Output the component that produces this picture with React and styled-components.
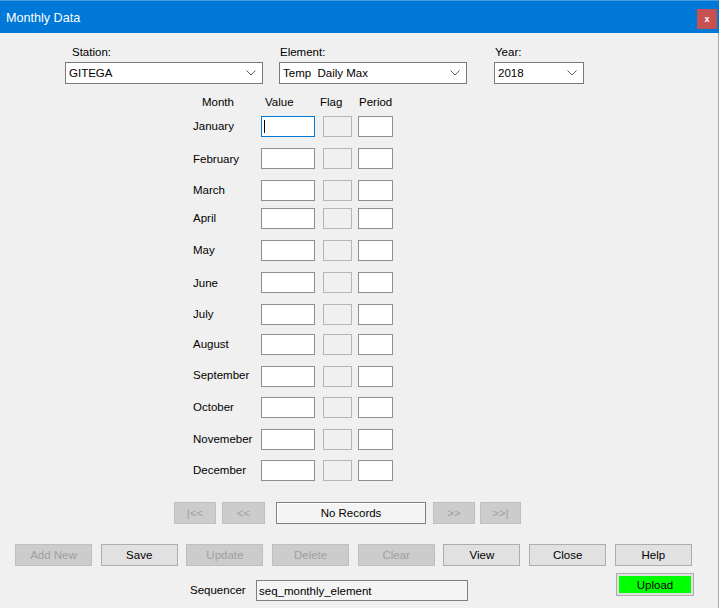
import React from "react";
import styled, { createGlobalStyle } from "styled-components";

const Global = createGlobalStyle`
  html, body { margin: 0; padding: 0; background: #f0f0f0; }
  body { font-family: "Liberation Sans", Arial, sans-serif; font-size: 11.5px; color: #000; }
  * { box-sizing: border-box; }
`;

const Window = styled.div`
  width: 719px;
  height: 608px;
  background: #f0f0f0;
  display: flex;
  flex-direction: column;
  overflow: hidden;
`;

const TitleBar = styled.div`
  height: 33px;
  flex: none;
  background: #0078d7;
  border-top: 1px solid #4c9be0;
  display: flex;
  align-items: flex-start;
  justify-content: space-between;
  padding-left: 6px;
  padding-right: 2px;
`;

const Title = styled.div`
  color: #fff;
  font-size: 12.6px;
  line-height: 14px;
  margin-top: 10px;
`;

const CloseBtn = styled.div`
  width: 20px;
  height: 20px;
  margin-top: 8px;
  background: #c75050;
  color: #fff;
  font-size: 9px;
  font-weight: bold;
  display: flex;
  align-items: center;
  justify-content: center;
  line-height: 1;
`;

const Body = styled.div`
  flex: 1;
  border-right: 1px solid #a9a9a9;
  display: flex;
  flex-direction: column;
`;

const TopRow = styled.div`
  display: flex;
  padding-left: 65px;
  margin-top: 12px;
`;

const FieldGroup = styled.div`
  display: flex;
  flex-direction: column;
  width: ${(p) => p.$w}px;
  margin-right: ${(p) => p.$mr || 0}px;
`;

const FieldLabel = styled.div`
  height: 14px;
  line-height: 14px;
  padding-left: ${(p) => p.$indent}px;
  margin-bottom: 3px;
`;

const Combo = styled.div`
  height: 22px;
  background: #fff;
  border: 1px solid #7a7a7a;
  display: flex;
  align-items: center;
  justify-content: space-between;
  padding: 0 6px 0 3px;
`;

const Chevron = () => (
  <svg width="10" height="6" viewBox="0 0 10 6">
    <path d="M0.5 0.5 L5 5 L9.5 0.5" fill="none" stroke="#606060" strokeWidth="1" />
  </svg>
);

const HeaderRow = styled.div`
  display: flex;
  padding-left: 202px;
  margin-top: 11px;
  height: 14px;
  line-height: 14px;
`;

const HeaderCell = styled.div`
  width: ${(p) => p.$w}px;
`;

const MonthRow = styled.div`
  display: flex;
  align-items: center;
  padding-left: 193px;
  height: 21px;
  margin-top: ${(p) => p.$mt}px;
`;

const MonthLabel = styled.div`
  width: 68px;
  line-height: 14px;
  margin-top: ${(p) => p.$dy || 0}px;
`;

const Box = styled.div`
  width: ${(p) => p.$w}px;
  height: 21px;
  margin-right: ${(p) => p.$mr || 0}px;
  background: ${(p) => (p.$disabled ? "#f0f0f0" : "#fff")};
  border: 1px solid ${(p) => (p.$focus ? "#0078d7" : p.$disabled ? "#b5b5b5" : "#8f8f8f")};
  display: flex;
  align-items: center;
  padding-left: 2px;
`;

const Caret = styled.span`
  width: 1px;
  height: 13px;
  background: #000;
`;

const NavRow = styled.div`
  display: flex;
  padding-left: 174px;
  margin-top: 21px;
  height: 22px;
`;

const Btn = styled.div`
  width: ${(p) => p.$w}px;
  height: ${(p) => p.$h || 22}px;
  margin-right: ${(p) => p.$mr || 0}px;
  flex: none;
  display: flex;
  align-items: center;
  justify-content: center;
  background: ${(p) => (p.$disabled ? "#cccccc" : "#e1e1e1")};
  border: 1px solid ${(p) => (p.$disabled ? "#bfbfbf" : "#adadad")};
  color: ${(p) => (p.$disabled ? "#a0a0a0" : "#000")};
  line-height: 14px;
`;

const RecordBox = styled.div`
  width: 150px;
  height: 22px;
  margin-right: 7px;
  border: 1px solid #7f7f7f;
  box-shadow: inset 1px 1px 0 #ffffff;
  background: #f4f4f4;
  display: flex;
  align-items: center;
  justify-content: center;
`;

const ButtonRow = styled.div`
  display: flex;
  gap: 8.7px;
  padding-left: 15px;
  margin-top: 20px;
`;

const BottomRow = styled.div`
  display: flex;
  align-items: flex-start;
  margin-top: 7px;
  padding-left: 190px;
`;

const SeqGroup = styled.div`
  display: flex;
  align-items: center;
  margin-top: 7px;
  margin-right: 148px;
`;

const SeqLabel = styled.div`
  width: 66px;
  margin-top: -1px;
`;

const SeqBox = styled.div`
  width: 212px;
  height: 21px;
  border: 1px solid #7f7f7f;
  background: #f4f4f4;
  display: flex;
  align-items: center;
  padding-left: 2px;
`;

const UploadBtn = styled.div`
  width: 78px;
  height: 23px;
  background: #e1e1e1;
  border: 1px solid #adadad;
  padding: 2px;
  display: flex;
`;

const UploadFace = styled.div`
  flex: 1;
  background: #00ff00;
  display: flex;
  align-items: center;
  justify-content: center;
`;

const months = [
  { name: "January", mt: 7, focus: true, dy: -2 },
  { name: "February", mt: 11, dy: 0 },
  { name: "March", mt: 11, dy: -1 },
  { name: "April", mt: 7, dy: -1 },
  { name: "May", mt: 11, dy: -1 },
  { name: "June", mt: 11, dy: 0 },
  { name: "July", mt: 11, dy: -1 },
  { name: "August", mt: 9, dy: -1 },
  { name: "September", mt: 11, dy: -3 },
  { name: "October", mt: 10, dy: -1 },
  { name: "Novemeber", mt: 11, dy: -2 },
  { name: "December", mt: 10, dy: -1 },
];

const actions = [
  { label: "Add New", disabled: true },
  { label: "Save" },
  { label: "Update", disabled: true },
  { label: "Delete", disabled: true },
  { label: "Clear", disabled: true },
  { label: "View" },
  { label: "Close" },
  { label: "Help" },
];

export default function App() {
  return (
    <>
      <Global />
      <Window>
        <TitleBar>
          <Title>Monthly Data</Title>
          <CloseBtn>x</CloseBtn>
        </TitleBar>
        <Body>
          <TopRow>
            <FieldGroup $w={198} $mr={16}>
              <FieldLabel $indent={7}>Station:</FieldLabel>
              <Combo>
                <span>GITEGA</span>
                <Chevron />
              </Combo>
            </FieldGroup>
            <FieldGroup $w={188} $mr={27}>
              <FieldLabel $indent={1}>Element:</FieldLabel>
              <Combo>
                <span>Temp&nbsp; Daily Max</span>
                <Chevron />
              </Combo>
            </FieldGroup>
            <FieldGroup $w={90}>
              <FieldLabel $indent={1}>Year:</FieldLabel>
              <Combo>
                <span>2018</span>
                <Chevron />
              </Combo>
            </FieldGroup>
          </TopRow>

          <HeaderRow>
            <HeaderCell $w={63}>Month</HeaderCell>
            <HeaderCell $w={55}>Value</HeaderCell>
            <HeaderCell $w={39}>Flag</HeaderCell>
            <HeaderCell $w={40}>Period</HeaderCell>
          </HeaderRow>

          {months.map((m) => (
            <MonthRow key={m.name} $mt={m.mt}>
              <MonthLabel $dy={m.dy}>{m.name}</MonthLabel>
              <Box $w={54} $mr={8} $focus={m.focus}>
                {m.focus && <Caret />}
              </Box>
              <Box $w={29} $mr={6} $disabled />
              <Box $w={35} />
            </MonthRow>
          ))}

          <NavRow>
            <Btn $w={42} $mr={6} $disabled>|&lt;&lt;</Btn>
            <Btn $w={43} $mr={11} $disabled>&lt;&lt;</Btn>
            <RecordBox>No Records</RecordBox>
            <Btn $w={42} $mr={5} $disabled>&gt;&gt;</Btn>
            <Btn $w={41} $disabled>&gt;&gt;|</Btn>
          </NavRow>

          <ButtonRow>
            {actions.map((a) => (
              <Btn key={a.label} $w={77} $disabled={a.disabled}>
                {a.label}
              </Btn>
            ))}
          </ButtonRow>

          <BottomRow>
            <SeqGroup>
              <SeqLabel>Sequencer</SeqLabel>
              <SeqBox>seq_monthly_element</SeqBox>
            </SeqGroup>
            <UploadBtn>
              <UploadFace>Upload</UploadFace>
            </UploadBtn>
          </BottomRow>
        </Body>
      </Window>
    </>
  );
}
